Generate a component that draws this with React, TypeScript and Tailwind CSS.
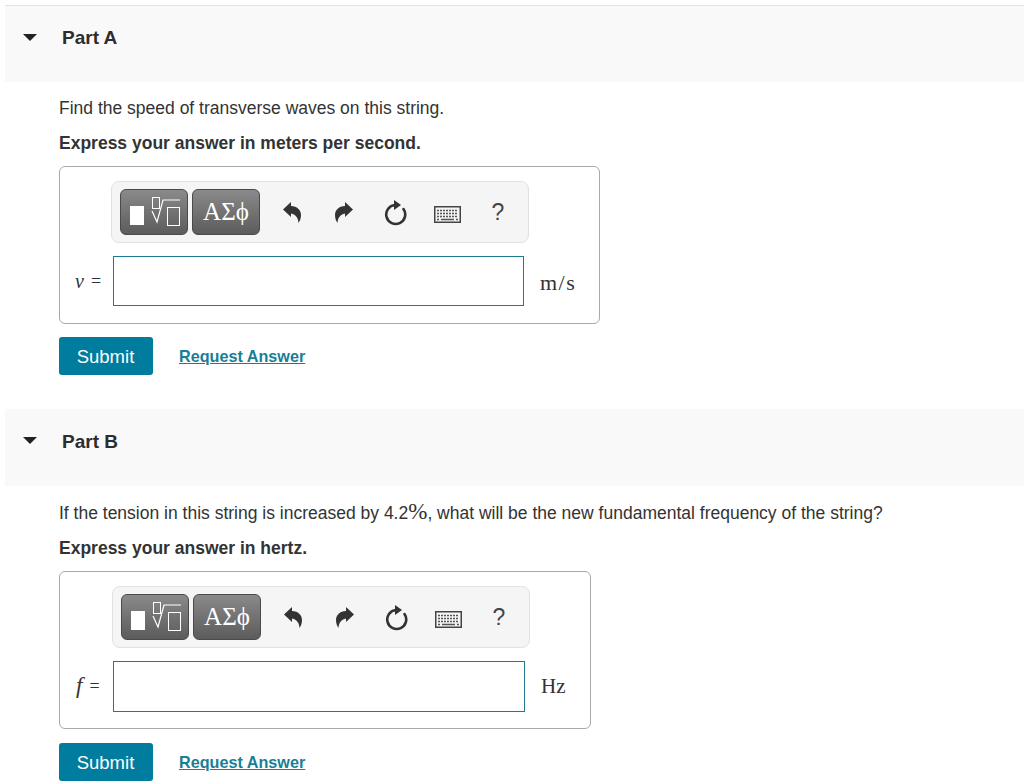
import React from 'react';

const TemplatesIcon = () => (
  <svg width="66" height="44" viewBox="0 0 66 44" fill="none">
    <rect x="9" y="16" width="14" height="19" fill="#fff" />
    <rect x="31.5" y="7.5" width="7" height="11" stroke="#fff" strokeWidth="1" />
    <rect x="46.5" y="17.5" width="12" height="18" stroke="#fff" strokeWidth="1" />
    <path d="M31 21 L36 32 L42 10 L59 10" stroke="#fff" strokeWidth="1.2" />
  </svg>
);

const UndoIcon = () => (
  <svg width="18" height="21" viewBox="0 0 18 21">
    <path d="M0 7.5 L8 0 L8 4 C14 4 18 8 18 13 C18 16 17 19 15.5 21 C15.5 17 13 12 8 11.5 L8 15 Z" fill="#333" />
  </svg>
);

const RedoIcon = () => (
  <svg width="18" height="21" viewBox="0 0 18 21">
    <path d="M18 7.5 L10 0 L10 4 C4 4 0 8 0 13 C0 16 1 19 2.5 21 C2.5 17 5 12 10 11.5 L10 15 Z" fill="#333" />
  </svg>
);

const ResetIcon = () => (
  <svg width="24" height="26" viewBox="0 0 24 26" fill="none">
    <path d="M19.5 9 A9.5 9.5 0 1 1 11 5" stroke="#333" strokeWidth="2.6" strokeLinecap="round" />
    <path d="M10 0 L17 5 L10 10 Z" fill="#333" />
  </svg>
);

const KeyboardIcon = () => (
  <svg width="27" height="17" viewBox="0 0 27 17" fill="none">
    <rect x="0.75" y="0.75" width="25.5" height="15.5" stroke="#444" strokeWidth="1.5" />
    <path d="M3 4.5 H24 M3 7.5 H24 M3 10.5 H24" stroke="#555" strokeWidth="1.5" strokeDasharray="2 1" />
    <path d="M3 13.5 H5 M7 13.5 H20 M22 13.5 H24" stroke="#555" strokeWidth="1.5" />
  </svg>
);

const Toolbar = ({ ml }: { ml: string }) => (
  <div className={`${ml} flex h-[62px] w-[418px] items-center rounded-lg border border-[#e3e0e3] bg-[#f5f5f5] pl-2`}>
    <div className="flex h-[46px] w-[68px] items-center justify-center rounded-md border border-[#4a4a4a] bg-gradient-to-b from-[#8a8a8a] to-[#5c5c5c]">
      <TemplatesIcon />
    </div>
    <div className="ml-1 flex h-[46px] w-[68px] items-center justify-center rounded-md border border-[#4a4a4a] bg-gradient-to-b from-[#8a8a8a] to-[#5c5c5c] font-['Liberation_Serif',serif] text-[25px] text-white">
      AΣϕ
    </div>
    <div className="ml-[6px] flex w-[52px] justify-center"><UndoIcon /></div>
    <div className="flex w-[52px] justify-center"><RedoIcon /></div>
    <div className="flex w-[52px] justify-center pt-[1px]"><ResetIcon /></div>
    <div className="flex w-[50px] justify-center pt-1"><KeyboardIcon /></div>
    <div className="flex w-[52px] justify-center font-['Liberation_Sans',sans-serif] text-[23px] text-[#444]">?</div>
  </div>
);

const Part = ({
  title,
  question,
  instruction,
  symbol,
  unit,
  headerClass,
  titleClass,
  instructionClass,
  boxClass,
  toolbarMl,
  inputClass,
  labelClass,
  symbolClass,
  unitClass,
  actionsClass,
}: {
  title: string;
  question: React.ReactNode;
  instruction: string;
  symbol: string;
  unit: string;
  headerClass: string;
  titleClass: string;
  instructionClass: string;
  boxClass: string;
  toolbarMl: string;
  inputClass: string;
  labelClass: string;
  symbolClass: string;
  unitClass: string;
  actionsClass: string;
}) => (
  <section>
    <div className={`${headerClass} flex items-start bg-[#f9f9f9]`}>
      <div className="ml-[18px] mt-[28px] h-0 w-0 border-x-[7.5px] border-t-[7px] border-x-transparent border-t-[#222]" />
      <h2 className={`${titleClass} ml-[24px] pl-[1px] text-[19px] font-bold leading-6 text-[#2d2d2d]`}>{title}</h2>
    </div>
    <div className="pl-[54px]">
      <p className="mt-[14px] h-[24px] whitespace-nowrap text-[17.5px] leading-6 text-[#333]">{question}</p>
      <p className={`${instructionClass} text-[17.5px] font-bold leading-6 text-[#333]`}>{instruction}</p>
      <div className={`${boxClass} h-[158px] rounded-md border border-[#a9a9a9] pt-[14px]`}>
        <Toolbar ml={toolbarMl} />
        <div className="mt-[13px] flex items-center">
          <span className={`${labelClass} flex items-center font-['Liberation_Serif',serif] text-[#333]`}>
            <i className={symbolClass}>{symbol}</i>
            <span className="ml-[7px] text-[18px]">=</span>
          </span>
          <div className={`${inputClass} border border-[#1d7a94] bg-white`} />
          <span className={`${unitClass} ml-[16px] font-['Liberation_Serif',serif] text-[#333]`}>{unit}</span>
        </div>
      </div>
      <div className={`${actionsClass} flex items-center`}>
        <button className="h-[38px] w-[94px] rounded-[3px] bg-[#007c9f] pr-[1px] pt-[1px] text-[18.5px] text-white">Submit</button>
        <a className="ml-[26px] pt-[1px] text-[16.2px] font-bold text-[#1a7f96] underline">Request Answer</a>
      </div>
    </div>
  </section>
);

export default function App() {
  return (
    <div className="h-[782px] overflow-hidden bg-white pl-[5px] pt-[5px] font-['Liberation_Sans',sans-serif]">
      <div className="border-t border-[#e2e2e2]">
        <Part
          title="Part A"
          question="Find the speed of transverse waves on this string."
          instruction="Express your answer in meters per second."
          symbol="v"
          unit="m/s"
          headerClass="h-[76px]"
          titleClass="mt-[19px] pt-[1px]"
          instructionClass="mt-[11px]"
          boxClass="mt-[11px] w-[541px]"
          toolbarMl="ml-[51px]"
          inputClass="h-[50px] w-[411px]"
          labelClass="w-[53px] pl-[15px]"
          symbolClass="text-[20px]"
          unitClass="pt-[2px] text-[22px] tracking-[1.5px]"
          actionsClass="mt-[13px]"
        />
      </div>
      <div className="mt-[34px]">
        <Part
          title="Part B"
          question={
            <>
              If the tension in this string is increased by 4.2
              <span className="font-['Liberation_Serif',serif] text-[23px] font-light">%</span>, what will be the new fundamental frequency of the string?
            </>
          }
          instruction="Express your answer in hertz."
          symbol="f"
          unit="Hz"
          headerClass="h-[77px]"
          titleClass="mt-[20px] pt-[1px]"
          instructionClass="mt-[12px]"
          boxClass="mt-[11px] w-[532px]"
          toolbarMl="ml-[52px]"
          inputClass="h-[51px] w-[412px]"
          labelClass="w-[53px] pl-[16px]"
          symbolClass="text-[23px]"
          unitClass="text-[21px]"
          actionsClass="mt-[14px]"
        />
      </div>
    </div>
  );
}
